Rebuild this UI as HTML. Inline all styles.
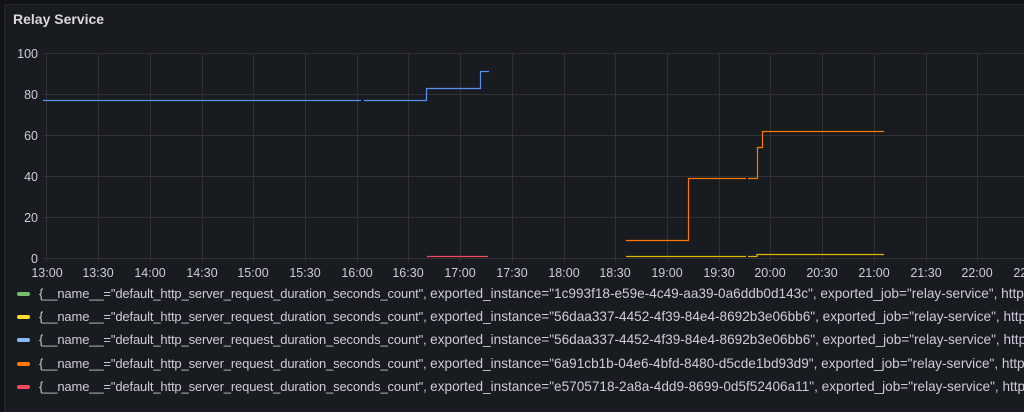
<!DOCTYPE html>
<html><head><meta charset="utf-8"><style>
html,body{margin:0;padding:0;background:#111217;width:1024px;height:412px;overflow:hidden;font-family:"Liberation Sans",sans-serif;position:relative;}
.wrap{position:absolute;left:0;top:0;width:1024px;height:412px;overflow:hidden;}
.panel{position:absolute;left:4px;top:4px;width:1030px;height:420px;background:#181b1f;border:1px solid #26282d;border-radius:2px;}
.title{position:absolute;left:13px;top:11px;color:#d8d9e0;font-size:14px;font-weight:bold;}
.leg{position:absolute;left:17px;color:#ccccdc;font-size:13px;white-space:nowrap;line-height:16px;}
.leg b{font-weight:normal;letter-spacing:-0.15px;}
.leg s{text-decoration:none;font-size:13.6px;}
.leg i{display:inline-block;width:13px;height:4px;border-radius:2px;vertical-align:middle;margin-right:9px;position:relative;top:-1px;}
</style></head><body><div class="wrap">
<div class="panel"></div>
<div class="title">Relay Service</div>
<svg width="1024" height="412" style="position:absolute;left:0;top:0" font-family="Liberation Sans, sans-serif" font-size="12.5" fill="#ccccdc">
<g stroke="#2f3136" stroke-width="1">
<line x1="43" y1="53.5" x2="1024" y2="53.5"/><line x1="43" y1="94.5" x2="1024" y2="94.5"/><line x1="43" y1="135.5" x2="1024" y2="135.5"/><line x1="43" y1="176.5" x2="1024" y2="176.5"/><line x1="43" y1="217.5" x2="1024" y2="217.5"/><line x1="43" y1="258.5" x2="1024" y2="258.5"/>
<line x1="46.5" y1="53" x2="46.5" y2="262"/><line x1="98.5" y1="53" x2="98.5" y2="262"/><line x1="150.5" y1="53" x2="150.5" y2="262"/><line x1="202.5" y1="53" x2="202.5" y2="262"/><line x1="253.5" y1="53" x2="253.5" y2="262"/><line x1="305.5" y1="53" x2="305.5" y2="262"/><line x1="357.5" y1="53" x2="357.5" y2="262"/><line x1="408.5" y1="53" x2="408.5" y2="262"/><line x1="460.5" y1="53" x2="460.5" y2="262"/><line x1="512.5" y1="53" x2="512.5" y2="262"/><line x1="564.5" y1="53" x2="564.5" y2="262"/><line x1="615.5" y1="53" x2="615.5" y2="262"/><line x1="667.5" y1="53" x2="667.5" y2="262"/><line x1="719.5" y1="53" x2="719.5" y2="262"/><line x1="770.5" y1="53" x2="770.5" y2="262"/><line x1="822.5" y1="53" x2="822.5" y2="262"/><line x1="874.5" y1="53" x2="874.5" y2="262"/><line x1="926.5" y1="53" x2="926.5" y2="262"/><line x1="977.5" y1="53" x2="977.5" y2="262"/>
</g>
<g text-anchor="end"><text x="38" y="58">100</text><text x="38" y="99">80</text><text x="38" y="140">60</text><text x="38" y="181">40</text><text x="38" y="222">20</text><text x="38" y="263">0</text></g>
<g text-anchor="middle"><text x="47" y="277">13:00</text><text x="98" y="277">13:30</text><text x="150" y="277">14:00</text><text x="202" y="277">14:30</text><text x="253" y="277">15:00</text><text x="305" y="277">15:30</text><text x="357" y="277">16:00</text><text x="408" y="277">16:30</text><text x="460" y="277">17:00</text><text x="512" y="277">17:30</text><text x="564" y="277">18:00</text><text x="615" y="277">18:30</text><text x="667" y="277">19:00</text><text x="719" y="277">19:30</text><text x="770" y="277">20:00</text><text x="822" y="277">20:30</text><text x="874" y="277">21:00</text><text x="926" y="277">21:30</text><text x="977" y="277">22:00</text><text x="1029" y="277">22:30</text></g>
<g fill="none" stroke-width="1.2">
<path d="M43 100.5H361M364 100.5H426.5V88.5H480.5V71.5H489" stroke="#5794f2"/>
<path d="M427 256.5H488" stroke="#f2495c"/>
<path d="M626 256.5H746M748 256.5H757V254.5H884" stroke="#e0b400"/>
<path d="M626 240.5H688.5V178.5H746M748 178.5H757.5V147.5H762.5V131.5H884" stroke="#ff780a"/>
</g>
</svg>
<div class="leg" style="top:286px"><i style="background:#73bf69"></i><b>{__name__="default_http_server_request_duration_seconds_count",</b> <s>exported_instance="1c993f18-e59e-4c49-aa39-0a6ddb0d143c", exported_job="relay-service", http_method="GET"}</s></div>
<div class="leg" style="top:309px"><i style="background:#fade2a"></i><b>{__name__="default_http_server_request_duration_seconds_count",</b> <s>exported_instance="56daa337-4452-4f39-84e4-8692b3e06bb6", exported_job="relay-service", http_method="GET"}</s></div>
<div class="leg" style="top:332px"><i style="background:#8ab8ff"></i><b>{__name__="default_http_server_request_duration_seconds_count",</b> <s>exported_instance="56daa337-4452-4f39-84e4-8692b3e06bb6", exported_job="relay-service", http_method="GET"}</s></div>
<div class="leg" style="top:356px"><i style="background:#ff780a"></i><b>{__name__="default_http_server_request_duration_seconds_count",</b> <s>exported_instance="6a91cb1b-04e6-4bfd-8480-d5cde1bd93d9", exported_job="relay-service", http_method="GET"}</s></div>
<div class="leg" style="top:379px"><i style="background:#f2495c"></i><b>{__name__="default_http_server_request_duration_seconds_count",</b> <s>exported_instance="e5705718-2a8a-4dd9-8699-0d5f52406a11", exported_job="relay-service", http_method="GET"}</s></div>
</div></body></html>
